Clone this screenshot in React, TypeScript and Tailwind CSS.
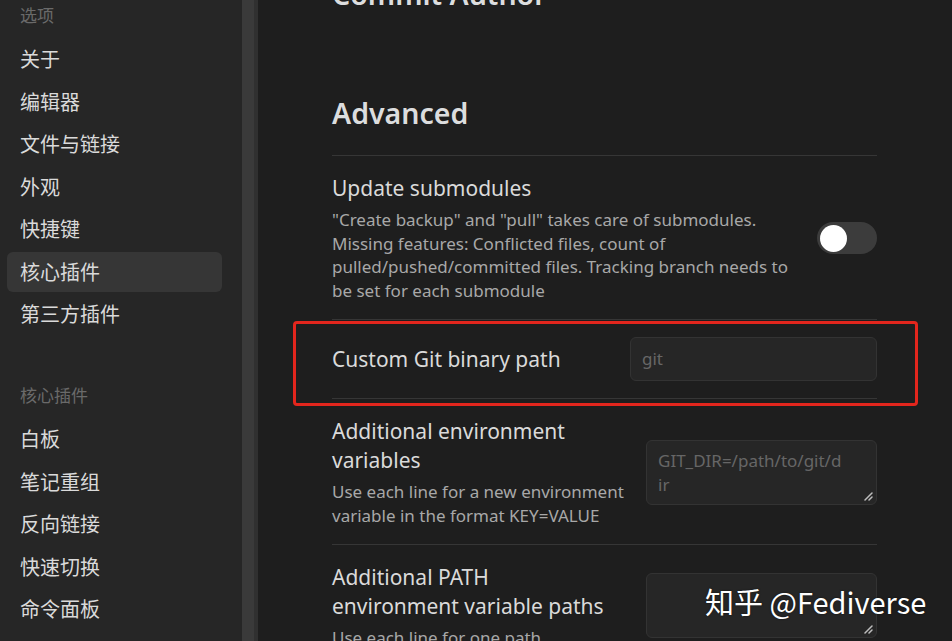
import React from "react";

const navTop = ["关于", "编辑器", "文件与链接", "外观", "快捷键", "核心插件", "第三方插件"];
const navCore = ["白板", "笔记重组", "反向链接", "快速切换", "命令面板"];

function NavItem({ label, active }: { label: string; active?: boolean }) {
 return (
  <div
   className={
    "h-[40px] flex items-center px-[13px] rounded-md text-[20px] text-[#dadada] " +
    (active ? "bg-[#363636]" : "")
   }
  >
   {label}
  </div>
 );
}

function Grip() {
 return (
  <svg className="absolute right-[3px] bottom-[3px]" width="10" height="10" viewBox="0 0 10 10">
   <path d="M9 2 L2 9 M9 6 L6 9" stroke="#bdbdbd" strokeWidth="1.5" strokeLinecap="round" />
  </svg>
 );
}

function TextBox({ lines }: { lines: string[] }) {
 return (
  <div className="relative w-[231px] h-[65px] rounded-md bg-[#262626] border border-[#333] px-[11px] pt-[8px] text-[17px] leading-[24px] text-[#666] whitespace-nowrap overflow-hidden">
   {lines.map((l) => (
    <div key={l}>{l}</div>
   ))}
   <Grip />
  </div>
 );
}

export default function App() {
 return (
  <div className="relative flex h-[641px] w-[952px] overflow-hidden bg-[#1e1e1e] font-['Noto_Sans','Noto_Sans_CJK_SC',sans-serif]">
   <aside className="w-[242px] shrink-0 bg-[#262626] pl-[7px] pr-[20px] pt-[3px] font-['Noto_Sans_CJK_SC',sans-serif]">
    <div className="px-[13px] text-[17px] leading-[24px] text-[#6a6a6a] mb-[12px]">选项</div>
    <div className="flex flex-col gap-[2.5px]">
     {navTop.map((n) => (
      <NavItem key={n} label={n} active={n === "核心插件"} />
     ))}
    </div>
    <div className="px-[13px] text-[17px] leading-[24px] text-[#6a6a6a] mt-[49px] mb-[12px]">核心插件</div>
    <div className="flex flex-col gap-[2.5px]">
     {navCore.map((n) => (
      <NavItem key={n} label={n} />
     ))}
    </div>
   </aside>
   <div className="w-[12px] shrink-0 bg-[#3a3a3a]" />
   <div className="w-[4px] shrink-0 bg-[#303030]" />

   <main className="flex-1 pl-[74px]">
    <div className="w-[545px] -mt-[24px]">
     <h2 className="text-[28.5px] leading-[36px] font-semibold text-[#dcddde]">Commit Author</h2>
     <h2 className="mt-[83px] text-[28.5px] leading-[36px] font-semibold text-[#dcddde]">Advanced</h2>

     <div className="mt-[24px] border-t border-[#363636] pt-[18px] pb-[17px] flex items-center justify-between">
      <div>
       <div className="text-[21px] leading-[29px] text-[#dadada]">Update submodules</div>
       <div className="mt-[5px] text-[17px] leading-[23.5px] text-[#a8a8a8] whitespace-nowrap">
        "Create backup" and "pull" takes care of submodules.
        <br />
        Missing features: Conflicted files, count of
        <br />
        pulled/pushed/committed files. Tracking branch needs to
        <br />
        be set for each submodule
       </div>
      </div>
      <div className="w-[60px] h-[32px] rounded-full bg-[#3c3c3c] p-[3px] flex items-center">
       <div className="w-[27px] h-[27px] rounded-full bg-white" />
      </div>
     </div>

     <div className="relative border-t border-[#363636] pt-[17px] pb-[17px] flex items-center justify-between">
      <div className="text-[21px] leading-[29px] text-[#dadada]">Custom Git binary path</div>
      <div className="w-[247px] h-[44px] rounded-md bg-[#262626] border border-[#333] px-[11px] flex items-center text-[17px] text-[#666]">
       git
      </div>
      <div className="absolute -left-[39px] -right-[41px] top-[1px] -bottom-[8px] border-[3px] border-[#e3261d] rounded-[4px]" />
     </div>

     <div className="border-t border-[#363636] pt-[18px] pb-[17px] flex items-center justify-between">
      <div>
       <div className="text-[21px] leading-[29px] text-[#dadada]">
        Additional environment
        <br />
        variables
       </div>
       <div className="mt-[5px] text-[17px] leading-[23.5px] text-[#a8a8a8] whitespace-nowrap">
        Use each line for a new environment
        <br />
        variable in the format KEY=VALUE
       </div>
      </div>
      <TextBox lines={["GIT_DIR=/path/to/git/d", "ir"]} />
     </div>

     <div className="border-t border-[#363636] pt-[18px] pb-[17px] flex items-start justify-between">
      <div>
       <div className="text-[21px] leading-[29px] text-[#dadada]">
        Additional PATH
        <br />
        environment variable paths
       </div>
       <div className="mt-[5px] text-[17px] leading-[23.5px] text-[#a8a8a8] whitespace-nowrap">
        Use each line for one path
       </div>
      </div>
      <div className="mt-[10px]">
       <TextBox lines={[]} />
      </div>
     </div>
    </div>
   </main>

   <div className="absolute left-[705px] top-[582px] text-[29px] leading-[38px] text-white whitespace-nowrap font-['Noto_Sans_CJK_SC',sans-serif] [text-shadow:0_0_2px_rgba(0,0,0,0.6)]">
    知乎 @Fediverse
   </div>
  </div>
 );
}
